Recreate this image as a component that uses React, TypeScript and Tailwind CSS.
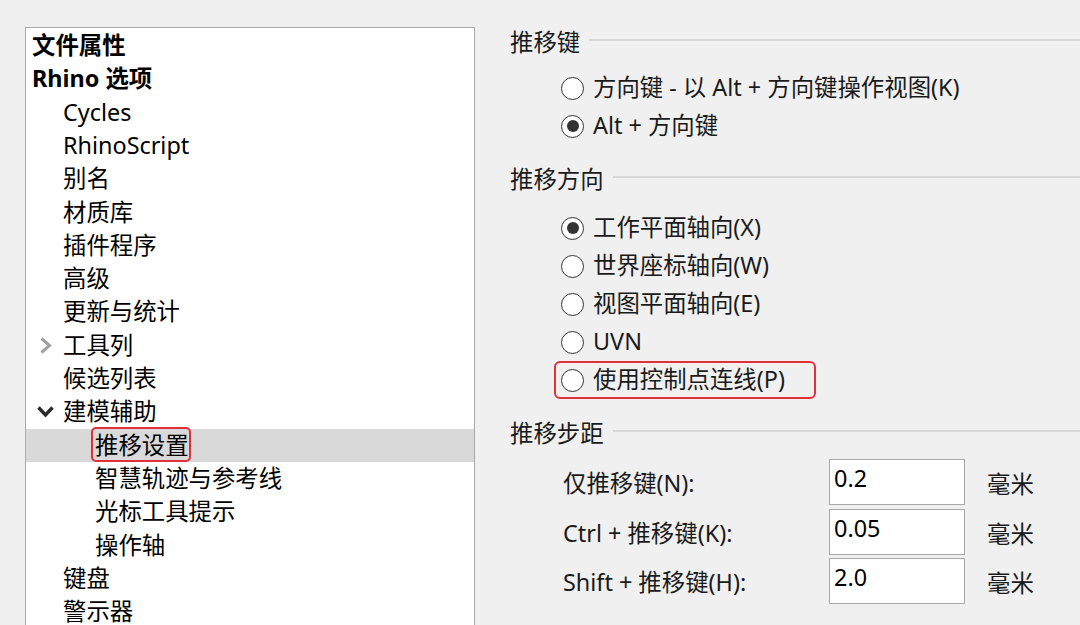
import type { ReactNode } from 'react';

const FONT = { fontFamily: '"Noto Sans", "Noto Sans CJK SC", sans-serif' };

type TreeItem = { label: string; level: number; bold?: boolean; chevron?: 'right' | 'down'; selected?: boolean };

const TREE: TreeItem[] = [
  { label: '文件属性', level: 0, bold: true },
  { label: 'Rhino 选项', level: 0, bold: true },
  { label: 'Cycles', level: 1 },
  { label: 'RhinoScript', level: 1 },
  { label: '别名', level: 1 },
  { label: '材质库', level: 1 },
  { label: '插件程序', level: 1 },
  { label: '高级', level: 1 },
  { label: '更新与统计', level: 1 },
  { label: '工具列', level: 1, chevron: 'right' },
  { label: '候选列表', level: 1 },
  { label: '建模辅助', level: 1, chevron: 'down' },
  { label: '推移设置', level: 2, selected: true },
  { label: '智慧轨迹与参考线', level: 2 },
  { label: '光标工具提示', level: 2 },
  { label: '操作轴', level: 2 },
  { label: '键盘', level: 1 },
  { label: '警示器', level: 1 },
];

function Chevron({ dir }: { dir: 'right' | 'down' }) {
  // 箭头占 27px 的槽位，放在文字左侧
  return (
    <span className="-ml-[27px] flex w-[27px] shrink-0 items-center">
      {dir === 'right' ? (
        <svg width="14" height="19" viewBox="0 0 14 19" className="ml-[3px] shrink-0">
          <polyline points="2.5,2.5 10.5,9.5 2.5,16.5" fill="none" stroke="#a0a0a0" strokeWidth="3" />
        </svg>
      ) : (
        <svg width="19" height="14" viewBox="0 0 19 14" className="mt-[1px] shrink-0">
          <polyline points="2.5,2.5 9.5,10 16.5,2.5" fill="none" stroke="#2a2a2a" strokeWidth="3.4" />
        </svg>
      )}
    </span>
  );
}

function TreeRow({ item }: { item: TreeItem }) {
  const pad = item.level === 0 ? 'pl-[6px]' : item.level === 1 ? 'pl-[37px]' : 'pl-[69px]';
  return (
    <div
      className={`flex h-[33.3px] items-center ${pad} ${item.selected ? 'bg-[#d9d9d9]' : ''} ${
        item.bold ? 'font-bold' : ''
      } whitespace-nowrap text-[23.4px] text-black`}
    >
      {item.chevron ? <Chevron dir={item.chevron} /> : null}
      <span className="relative">
        {item.label}
        {item.selected ? (
          <span className="absolute -left-[4px] -top-[1px] h-[35px] w-[100px] rounded-[5px] border-2 border-[#e0303a]" />
        ) : null}
      </span>
    </div>
  );
}

function SectionHeader({ title }: { title: string }) {
  return (
    <div className="flex h-[40px] items-center text-[23.4px] text-[#1a1a1a]">
      <span className="whitespace-nowrap">{title}</span>
      <div className="mb-[7px] ml-[9px] h-[2px] flex-1 bg-[#d6d6d6]" />
    </div>
  );
}

function Radio({ label, checked, marked }: { label: string; checked?: boolean; marked?: boolean }): ReactNode {
  return (
    <div className="relative flex h-[38px] items-center pl-[51px] text-[23.4px] text-[#1a1a1a]">
      <span className="mr-[9px] flex h-[23px] w-[23px] shrink-0 items-center justify-center rounded-full border-[1.6px] border-[#333] bg-white">
        {checked ? <span className="h-[12px] w-[12px] rounded-full bg-[#333]" /> : null}
      </span>
      <span className="whitespace-nowrap">{label}</span>
      {marked ? (
        <span className="absolute left-[44px] top-0 h-[38px] w-[262px] rounded-[6px] border-2 border-[#e0303a]" />
      ) : null}
    </div>
  );
}

function StepRow({ label, value }: { label: string; value: string }) {
  return (
    <div className="flex h-[49.5px] items-start pl-[53px] text-[23.4px] text-[#1a1a1a]">
      <span className="mt-[7px] w-[266px] whitespace-nowrap">{label}</span>
      <div className="h-[46px] w-[136px] border border-[#a8a8a8] bg-white pl-[4px] pt-[1px] leading-[34px] text-black">
        {value}
      </div>
      <span className="ml-[22px] mt-[8px] whitespace-nowrap">毫米</span>
    </div>
  );
}

export default function App() {
  return (
    <div className="flex h-[625px] w-[1080px] overflow-hidden bg-[#f0f0f0]" style={FONT}>
      <div className="ml-[25px] mt-[27px] h-[640px] w-[450px] shrink-0 border border-[#a9a9a9] bg-white pt-[1px]">
        {TREE.map((item) => (
          <TreeRow key={item.label} item={item} />
        ))}
      </div>

      <div className="flex-1 pl-[35px] pt-[23px]">
        <SectionHeader title="推移键" />
        <div className="pt-[6px]">
          <Radio label="方向键 - 以 Alt + 方向键操作视图(K)" />
          <Radio label="Alt + 方向键" checked />
        </div>

        <div className="mt-[15px]">
          <SectionHeader title="推移方向" />
        </div>
        <div className="mt-[9px]">
          <Radio label="工作平面轴向(X)" checked />
          <Radio label="世界座标轴向(W)" />
          <Radio label="视图平面轴向(E)" />
          <Radio label="UVN" />
          <Radio label="使用控制点连线(P)" marked />
        </div>

        <div className="mt-[15px]">
          <SectionHeader title="推移步距" />
        </div>
        <div className="mt-[5px]">
          <StepRow label="仅推移键(N):" value="0.2" />
          <StepRow label="Ctrl + 推移键(K):" value="0.05" />
          <StepRow label="Shift + 推移键(H):" value="2.0" />
        </div>
      </div>
    </div>
  );
}
